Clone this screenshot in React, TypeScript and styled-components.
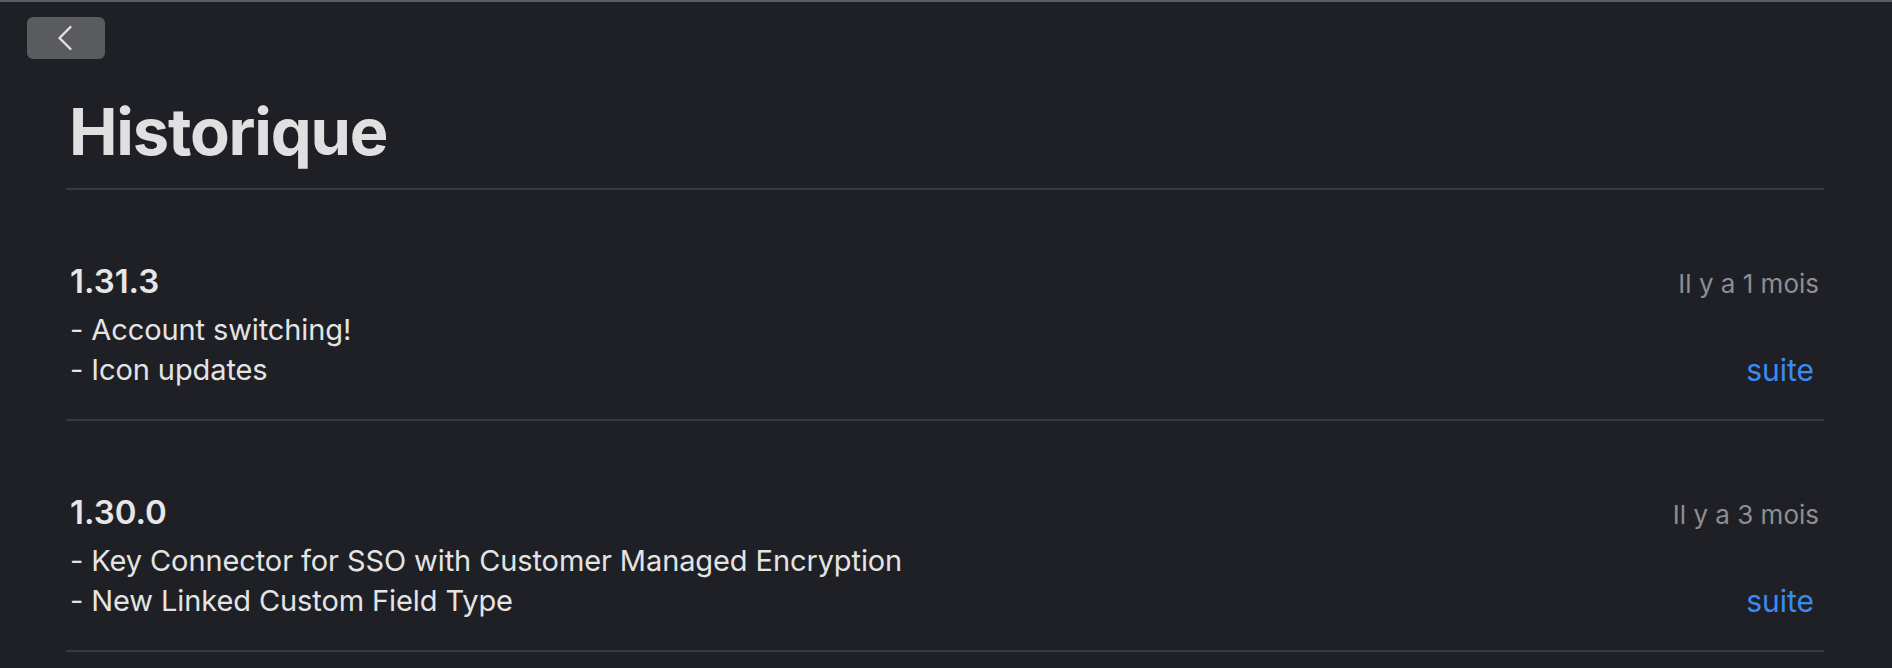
import React from 'react'
import styled, { createGlobalStyle } from 'styled-components'

const GlobalStyle = createGlobalStyle`
    html, body {
        margin: 0;
        padding: 0;
        background-color: #1f2025;
    }
    body {
        font-family: 'Inter', 'Noto Sans', 'Liberation Sans', sans-serif;
        -webkit-font-smoothing: antialiased;
    }
`

const Window = styled.div`
    min-height: 100vh;
    box-sizing: border-box;
    border-top: 2px solid #5d5e61;
    background-color: #1f2025;
`

const Toolbar = styled.div`
    display: flex;
    padding: 15px 27px 0;
`

const BackButton = styled.button`
    display: flex;
    align-items: center;
    justify-content: center;
    width: 78px;
    height: 42px;
    padding: 0 3px 0 0;
    border: none;
    border-radius: 6px;
    background-color: #5a5b5e;
    color: #e2e2e4;
    cursor: pointer;
`

const Content = styled.div`
    padding: 33px 68px 0 66px;
`

const Title = styled.h1`
    margin: 0;
    padding: 0 0 16px 3px;
    border-bottom: 2px solid #38393d;
    font-size: 65px;
    line-height: 80px;
    font-weight: 700;
    color: #e0e0e0;
    letter-spacing: -1.2px;
`

const Release = styled.section`
    padding: 71px 4px 29px 4px;
    border-bottom: 2px solid #38393d;
`

const ReleaseHead = styled.div`
    display: flex;
    justify-content: space-between;
    align-items: baseline;
    height: 40px;
`

const Version = styled.div`
    font-size: 33px;
    line-height: 40px;
    font-weight: 600;
    color: #e6e6e6;
`

const Age = styled.div`
    font-size: 26px;
    line-height: 30px;
    color: #8e8e92;
    padding-right: 1px;
`

const ReleaseBody = styled.div`
    display: flex;
    justify-content: space-between;
    align-items: flex-end;
    margin-top: 9px;
`

const Notes = styled.div`
    font-size: 29px;
    line-height: 40px;
    color: #e4e4e4;
    letter-spacing: -0.1px;
    white-space: pre-line;
`

const MoreLink = styled.a`
    font-size: 30px;
    line-height: 40px;
    color: #3a8cf3;
    text-decoration: none;
    padding-right: 6px;
    cursor: pointer;
`

const ChevronLeft = () => (
    <svg width="16" height="26" viewBox="0 0 16 26" fill="none">
        <polyline
            points="13.5,2 2.5,13 13.5,24"
            stroke="currentColor"
            strokeWidth="2.4"
            strokeLinecap="round"
            strokeLinejoin="round"
        />
    </svg>
)

const releases = [
    {
        version: '1.31.3',
        age: 'Il y a 1 mois',
        notes: ['- Account switching!', '- Icon updates'],
    },
    {
        version: '1.30.0',
        age: 'Il y a 3 mois',
        notes: [
            '- Key Connector for SSO with Customer Managed Encryption',
            '- New Linked Custom Field Type',
        ],
    },
]

const App = () => {
    return (
        <Window>
            <GlobalStyle />
            <Toolbar>
                <BackButton aria-label="Retour">
                    <ChevronLeft />
                </BackButton>
            </Toolbar>
            <Content>
                <Title>Historique</Title>
                {releases.map((r) => (
                    <Release key={r.version}>
                        <ReleaseHead>
                            <Version>{r.version}</Version>
                            <Age>{r.age}</Age>
                        </ReleaseHead>
                        <ReleaseBody>
                            <Notes>{r.notes.join('\n')}</Notes>
                            <MoreLink>suite</MoreLink>
                        </ReleaseBody>
                    </Release>
                ))}
            </Content>
        </Window>
    )
}

export default App
